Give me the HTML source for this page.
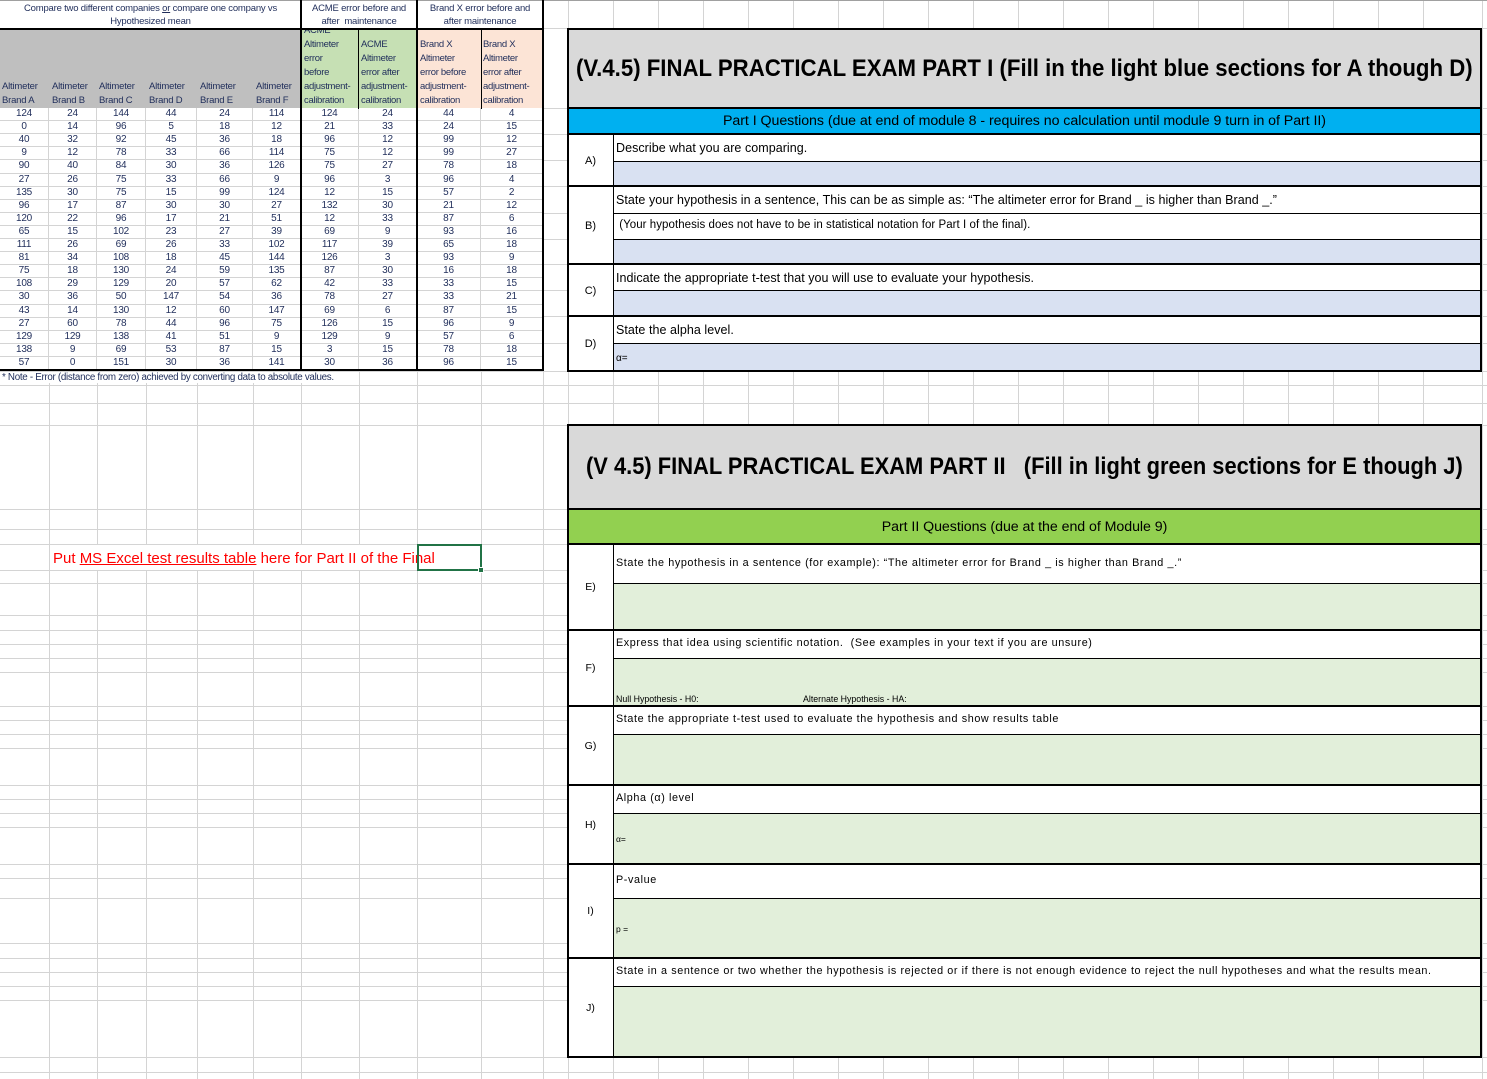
<!DOCTYPE html>
<html><head><meta charset="utf-8"><style>
*{margin:0;padding:0;box-sizing:border-box}
body{width:1487px;height:1079px;position:relative;overflow:hidden;background:#fff;font-family:"Liberation Sans",Arial,sans-serif;color:#000}
.a{position:absolute}
.nv{color:#1f2d5a}
.hl{position:absolute;white-space:nowrap}
.data{position:absolute;left:0;top:108px;width:543px;height:262px;display:grid;grid-template-columns:49px 48px 49px 51px 56px 48px 58px 58px 64px 62px;grid-template-rows:repeat(20,1fr);font-size:10px;color:#1f2d5a;letter-spacing:-0.2px}
.data div{text-align:center;line-height:12px;border-right:1px solid #d4d4d4;border-bottom:1px solid #d4d4d4;background:#fff}
.blk{position:absolute;background:#000}
.q1{position:absolute;font-size:12.5px;letter-spacing:0.05px;white-space:nowrap}
.q2{position:absolute;font-size:10.8px;letter-spacing:0.6px;white-space:nowrap}
.lab{position:absolute;font-size:11px;text-align:center;width:45px;left:568px}
</style></head><body>
<svg class="a" style="left:0;top:0" width="1487" height="1079">
<g stroke="#d4d4d4" stroke-width="1">
<line x1="49.5" y1="0" x2="49.5" y2="1079"/><line x1="97.5" y1="0" x2="97.5" y2="1079"/><line x1="146.5" y1="0" x2="146.5" y2="1079"/><line x1="197.5" y1="0" x2="197.5" y2="1079"/><line x1="253.5" y1="0" x2="253.5" y2="1079"/><line x1="301.5" y1="0" x2="301.5" y2="1079"/><line x1="359.5" y1="0" x2="359.5" y2="1079"/><line x1="417.5" y1="0" x2="417.5" y2="1079"/><line x1="481.5" y1="0" x2="481.5" y2="1079"/><line x1="543.5" y1="0" x2="543.5" y2="1079"/><line x1="568.5" y1="0" x2="568.5" y2="1079"/><line x1="613.5" y1="0" x2="613.5" y2="1079"/>
<line x1="658.5" y1="0" x2="658.5" y2="1079"/><line x1="703.5" y1="0" x2="703.5" y2="1079"/><line x1="748.5" y1="0" x2="748.5" y2="1079"/><line x1="793.5" y1="0" x2="793.5" y2="1079"/><line x1="838.5" y1="0" x2="838.5" y2="1079"/><line x1="883.5" y1="0" x2="883.5" y2="1079"/><line x1="928.5" y1="0" x2="928.5" y2="1079"/><line x1="973.5" y1="0" x2="973.5" y2="1079"/><line x1="1018.5" y1="0" x2="1018.5" y2="1079"/><line x1="1063.5" y1="0" x2="1063.5" y2="1079"/><line x1="1108.5" y1="0" x2="1108.5" y2="1079"/><line x1="1153.5" y1="0" x2="1153.5" y2="1079"/><line x1="1198.5" y1="0" x2="1198.5" y2="1079"/><line x1="1243.5" y1="0" x2="1243.5" y2="1079"/><line x1="1288.5" y1="0" x2="1288.5" y2="1079"/><line x1="1333.5" y1="0" x2="1333.5" y2="1079"/><line x1="1378.5" y1="0" x2="1378.5" y2="1079"/><line x1="1423.5" y1="0" x2="1423.5" y2="1079"/><line x1="1482.5" y1="0" x2="1482.5" y2="1079"/>
<line x1="0" y1="28.5" x2="1487" y2="28.5"/><line x1="0" y1="108.5" x2="1487" y2="108.5"/><line x1="0" y1="134.5" x2="1487" y2="134.5"/><line x1="0" y1="160.5" x2="1487" y2="160.5"/><line x1="0" y1="186.5" x2="1487" y2="186.5"/><line x1="0" y1="213.5" x2="1487" y2="213.5"/><line x1="0" y1="239.5" x2="1487" y2="239.5"/><line x1="0" y1="264.5" x2="1487" y2="264.5"/><line x1="0" y1="290.5" x2="1487" y2="290.5"/><line x1="0" y1="316.5" x2="1487" y2="316.5"/><line x1="0" y1="343.5" x2="1487" y2="343.5"/><line x1="0" y1="371.5" x2="1487" y2="371.5"/>
<line x1="0" y1="385.5" x2="1487" y2="385.5"/><line x1="0" y1="403.5" x2="1487" y2="403.5"/><line x1="0" y1="425.5" x2="1487" y2="425.5"/><line x1="0" y1="509.5" x2="1487" y2="509.5"/><line x1="0" y1="529.5" x2="1487" y2="529.5"/><line x1="0" y1="544.5" x2="1487" y2="544.5"/><line x1="0" y1="570.5" x2="1487" y2="570.5"/><line x1="0" y1="583.5" x2="1487" y2="583.5"/><line x1="0" y1="615.5" x2="1487" y2="615.5"/><line x1="0" y1="630.5" x2="1487" y2="630.5"/><line x1="0" y1="644.5" x2="1487" y2="644.5"/><line x1="0" y1="658.5" x2="1487" y2="658.5"/><line x1="0" y1="672.5" x2="1487" y2="672.5"/><line x1="0" y1="706.5" x2="1487" y2="706.5"/><line x1="0" y1="720.5" x2="1487" y2="720.5"/><line x1="0" y1="734.5" x2="1487" y2="734.5"/><line x1="0" y1="748.5" x2="1487" y2="748.5"/><line x1="0" y1="785.5" x2="1487" y2="785.5"/><line x1="0" y1="799.5" x2="1487" y2="799.5"/><line x1="0" y1="813.5" x2="1487" y2="813.5"/><line x1="0" y1="827.5" x2="1487" y2="827.5"/><line x1="0" y1="864.5" x2="1487" y2="864.5"/><line x1="0" y1="878.5" x2="1487" y2="878.5"/><line x1="0" y1="898.5" x2="1487" y2="898.5"/><line x1="0" y1="943.5" x2="1487" y2="943.5"/><line x1="0" y1="958.5" x2="1487" y2="958.5"/><line x1="0" y1="972.5" x2="1487" y2="972.5"/><line x1="0" y1="986.5" x2="1487" y2="986.5"/><line x1="0" y1="1000.5" x2="1487" y2="1000.5"/><line x1="0" y1="1057.5" x2="1487" y2="1057.5"/><line x1="0" y1="1072.5" x2="1487" y2="1072.5"/>
</g>
<line x1="0" y1="0.5" x2="1487" y2="0.5" stroke="#a0a0a0"/>
</svg>

<div class="a" style="left:0;top:1px;width:301px;height:27px;background:#fff"></div>
<div class="a nv" style="left:0;top:2px;width:301px;text-align:center;font-size:9.5px;line-height:13px;letter-spacing:-0.2px">Compare two different companies <u>or</u> compare one company vs<br>Hypothesized mean</div>
<div class="a" style="left:302px;top:1px;width:115px;height:27px;background:#fff"></div>
<div class="a nv" style="left:301px;top:2px;width:116px;text-align:center;font-size:9.5px;line-height:13px;letter-spacing:-0.2px">ACME error before and<br>after&nbsp; maintenance</div>
<div class="a" style="left:418px;top:1px;width:125px;height:27px;background:#fff"></div>
<div class="a nv" style="left:417px;top:2px;width:126px;text-align:center;font-size:9.5px;line-height:13px;letter-spacing:-0.2px">Brand X error before and<br>after maintenance</div>

<div class="a" style="left:0;top:29px;width:301px;height:79px;background:#bfbfbf"></div>
<div class="a" style="left:301px;top:29px;width:116px;height:79px;background:#c6e0b4;overflow:hidden"></div>
<div class="a" style="left:417px;top:29px;width:126px;height:79px;background:#fce4d6"></div>
<div class="a nv" style="font-size:9.5px;line-height:14px;left:2px;top:80px;letter-spacing:-0.2px">Altimeter<br>Brand A</div>
<div class="a nv" style="font-size:9.5px;line-height:14px;left:52px;top:80px;letter-spacing:-0.2px">Altimeter<br>Brand B</div>
<div class="a nv" style="font-size:9.5px;line-height:14px;left:99px;top:80px;letter-spacing:-0.2px">Altimeter<br>Brand C</div>
<div class="a nv" style="font-size:9.5px;line-height:14px;left:149px;top:80px;letter-spacing:-0.2px">Altimeter<br>Brand D</div>
<div class="a nv" style="font-size:9.5px;line-height:14px;left:200px;top:80px;letter-spacing:-0.2px">Altimeter<br>Brand E</div>
<div class="a nv" style="font-size:9.5px;line-height:14px;left:256px;top:80px;letter-spacing:-0.2px">Altimeter<br>Brand F</div>
<div class="a" style="left:303px;top:29px;width:56px;height:79px;overflow:hidden"><div class="a nv" style="font-size:9.5px;line-height:14px;left:1px;top:-5px;letter-spacing:-0.3px;white-space:nowrap">ACME<br>Altimeter<br>error<br>before<br>adjustment-<br>calibration</div></div>
<div class="a nv" style="font-size:9.5px;line-height:14px;left:361px;top:38px;letter-spacing:-0.3px;white-space:nowrap">ACME<br>Altimeter<br>error after<br>adjustment-<br>calibration</div>
<div class="a nv" style="font-size:9.5px;line-height:14px;left:420px;top:38px;letter-spacing:-0.3px;white-space:nowrap">Brand X<br>Altimeter<br>error before<br>adjustment-<br>calibration</div>
<div class="a nv" style="font-size:9.5px;line-height:14px;left:483px;top:38px;letter-spacing:-0.3px;white-space:nowrap">Brand X<br>Altimeter<br>error after<br>adjustment-<br>calibration</div>

<div class="data">
<div>124</div><div>24</div><div>144</div><div>44</div><div>24</div><div>114</div><div>124</div><div>24</div><div>44</div><div>4</div>
<div>0</div><div>14</div><div>96</div><div>5</div><div>18</div><div>12</div><div>21</div><div>33</div><div>24</div><div>15</div>
<div>40</div><div>32</div><div>92</div><div>45</div><div>36</div><div>18</div><div>96</div><div>12</div><div>99</div><div>12</div>
<div>9</div><div>12</div><div>78</div><div>33</div><div>66</div><div>114</div><div>75</div><div>12</div><div>99</div><div>27</div>
<div>90</div><div>40</div><div>84</div><div>30</div><div>36</div><div>126</div><div>75</div><div>27</div><div>78</div><div>18</div>
<div>27</div><div>26</div><div>75</div><div>33</div><div>66</div><div>9</div><div>96</div><div>3</div><div>96</div><div>4</div>
<div>135</div><div>30</div><div>75</div><div>15</div><div>99</div><div>124</div><div>12</div><div>15</div><div>57</div><div>2</div>
<div>96</div><div>17</div><div>87</div><div>30</div><div>30</div><div>27</div><div>132</div><div>30</div><div>21</div><div>12</div>
<div>120</div><div>22</div><div>96</div><div>17</div><div>21</div><div>51</div><div>12</div><div>33</div><div>87</div><div>6</div>
<div>65</div><div>15</div><div>102</div><div>23</div><div>27</div><div>39</div><div>69</div><div>9</div><div>93</div><div>16</div>
<div>111</div><div>26</div><div>69</div><div>26</div><div>33</div><div>102</div><div>117</div><div>39</div><div>65</div><div>18</div>
<div>81</div><div>34</div><div>108</div><div>18</div><div>45</div><div>144</div><div>126</div><div>3</div><div>93</div><div>9</div>
<div>75</div><div>18</div><div>130</div><div>24</div><div>59</div><div>135</div><div>87</div><div>30</div><div>16</div><div>18</div>
<div>108</div><div>29</div><div>129</div><div>20</div><div>57</div><div>62</div><div>42</div><div>33</div><div>33</div><div>15</div>
<div>30</div><div>36</div><div>50</div><div>147</div><div>54</div><div>36</div><div>78</div><div>27</div><div>33</div><div>21</div>
<div>43</div><div>14</div><div>130</div><div>12</div><div>60</div><div>147</div><div>69</div><div>6</div><div>87</div><div>15</div>
<div>27</div><div>60</div><div>78</div><div>44</div><div>96</div><div>75</div><div>126</div><div>15</div><div>96</div><div>9</div>
<div>129</div><div>129</div><div>138</div><div>41</div><div>51</div><div>9</div><div>129</div><div>9</div><div>57</div><div>6</div>
<div>138</div><div>9</div><div>69</div><div>53</div><div>87</div><div>15</div><div>3</div><div>15</div><div>78</div><div>18</div>
<div>57</div><div>0</div><div>151</div><div>30</div><div>36</div><div>141</div><div>30</div><div>36</div><div>96</div><div>15</div>
</div>
<div class="blk" style="left:0;top:28px;width:544px;height:2px"></div>
<div class="blk" style="left:0;top:369px;width:544px;height:2px"></div>
<div class="blk" style="left:300px;top:0;width:2px;height:371px"></div>
<div class="blk" style="left:416px;top:0;width:2px;height:371px"></div>
<div class="blk" style="left:542px;top:0;width:2px;height:371px"></div>
<div class="blk" style="left:358px;top:29px;width:1px;height:80px"></div>
<div class="blk" style="left:481px;top:29px;width:1px;height:80px"></div>
<div class="a nv" style="left:2px;top:372px;font-size:9.8px;letter-spacing:-0.3px;white-space:nowrap;background:#fff;padding-right:3px">* Note - Error (distance from zero) achieved by converting data to absolute values.</div>

<div class="a" style="left:50px;top:545px;width:366px;height:25px;background:#fff"></div>
<div class="a" style="left:53px;top:550px;font-size:15px;color:#ff0000;white-space:nowrap;letter-spacing:0px">Put <u>MS Excel test results table</u> here for Part II of the Final</div>
<div class="a" style="left:417px;top:544px;width:65px;height:27px;border:2px solid #217346"></div>
<div class="a" style="left:478px;top:567px;width:6px;height:6px;background:#217346;border:1px solid #fff"></div>

<!-- PART I -->
<div class="a" style="left:567px;top:28px;width:915px;height:344px;background:#fff;border:2px solid #000"></div>
<div class="a" style="left:569px;top:30px;width:911px;height:77px;background:#d9d9d9"></div>
<div class="hl" style="left:576px;top:55px;font-size:24px;font-weight:bold;transform:scaleX(0.925);transform-origin:left top">(V.4.5) FINAL PRACTICAL EXAM PART I (Fill in the light blue sections for A though D)</div>
<div class="blk" style="left:567px;top:107px;width:915px;height:2px"></div>
<div class="a" style="left:569px;top:109px;width:911px;height:24px;background:#00b0f0"></div>
<div class="hl" style="left:569px;width:911px;text-align:center;top:113px;font-size:14.2px;letter-spacing:-0.05px">Part I Questions (due at end of module 8 - requires no calculation until module 9 turn in of Part II)</div>
<div class="blk" style="left:567px;top:133px;width:915px;height:2px"></div>
<div class="blk" style="left:613px;top:134px;width:1px;height:237px"></div>
<div class="a" style="left:614px;top:161px;width:866px;height:25px;background:#d9e1f2;border-top:1px solid #000"></div>
<div class="blk" style="left:567px;top:185px;width:915px;height:2px"></div>
<div class="lab" style="top:155px">A)</div>
<div class="q1" style="left:616px;top:141px">Describe what you are comparing.</div>
<div class="a" style="left:614px;top:213px;width:866px;height:1px;background:#000"></div>
<div class="a" style="left:614px;top:239px;width:866px;height:25px;background:#d9e1f2;border-top:1px solid #000"></div>
<div class="blk" style="left:567px;top:263px;width:915px;height:2px"></div>
<div class="lab" style="top:220px">B)</div>
<div class="q1" style="left:616px;top:193px">State your hypothesis in a sentence, This can be as simple as: “The altimeter error for Brand _ is higher than Brand _.”</div>
<div class="q1" style="left:616px;top:219px;font-size:11.5px">&nbsp;(Your hypothesis does not have to be in statistical notation for Part I of the final).</div>
<div class="a" style="left:614px;top:290px;width:866px;height:26px;background:#d9e1f2;border-top:1px solid #000"></div>
<div class="blk" style="left:567px;top:315px;width:915px;height:2px"></div>
<div class="lab" style="top:285px">C)</div>
<div class="q1" style="left:616px;top:271px">Indicate the appropriate t-test that you will use to evaluate your hypothesis.</div>
<div class="a" style="left:614px;top:343px;width:866px;height:27px;background:#d9e1f2;border-top:1px solid #000"></div>
<div class="lab" style="top:338px">D)</div>
<div class="q1" style="left:616px;top:323px">State the alpha level.</div>
<div class="a" style="left:616px;top:353px;font-size:10px">α=</div>

<!-- PART II -->
<div class="a" style="left:567px;top:424px;width:915px;height:634px;background:#fff;border:2px solid #000"></div>
<div class="a" style="left:569px;top:426px;width:911px;height:83px;background:#d9d9d9"></div>
<div class="hl" style="left:586px;top:453px;font-size:24px;font-weight:bold;transform:scaleX(0.912);transform-origin:left top">(V 4.5) FINAL PRACTICAL EXAM PART II&nbsp;&nbsp; (Fill in light green sections for E though J)</div>
<div class="blk" style="left:567px;top:508px;width:915px;height:2px"></div>
<div class="a" style="left:569px;top:510px;width:911px;height:33px;background:#92d050"></div>
<div class="hl" style="left:569px;width:911px;text-align:center;top:519px;font-size:14.2px;letter-spacing:-0.05px">Part II Questions (due at the end of Module 9)</div>
<div class="blk" style="left:567px;top:543px;width:915px;height:2px"></div>
<div class="blk" style="left:613px;top:544px;width:1px;height:512px"></div>
<div class="a" style="left:614px;top:583px;width:866px;height:46px;background:#e2efda;border-top:1px solid #000"></div>
<div class="blk" style="left:567px;top:629px;width:915px;height:2px"></div>
<div class="lab" style="top:581px;font-size:10.5px">E)</div>
<div class="q2" style="left:616px;top:557px">State the hypothesis in a sentence (for example): “The altimeter error for Brand _ is higher than Brand _.”</div>
<div class="a" style="left:614px;top:658px;width:866px;height:47px;background:#e2efda;border-top:1px solid #000"></div>
<div class="blk" style="left:567px;top:705px;width:915px;height:2px"></div>
<div class="lab" style="top:662px;font-size:10.5px">F)</div>
<div class="q2" style="left:616px;top:637px">Express that idea using scientific notation.&nbsp; (See examples in your text if you are unsure)</div>
<div class="a" style="left:616px;top:694px;font-size:8.8px;white-space:nowrap">Null Hypothesis - H0:</div>
<div class="a" style="left:803px;top:694px;font-size:8.8px;white-space:nowrap">Alternate Hypothesis - HA:</div>
<div class="a" style="left:614px;top:734px;width:866px;height:50px;background:#e2efda;border-top:1px solid #000"></div>
<div class="blk" style="left:567px;top:784px;width:915px;height:2px"></div>
<div class="lab" style="top:740px;font-size:10.5px">G)</div>
<div class="q2" style="left:616px;top:713px">State the appropriate t-test used to evaluate the hypothesis and show results table</div>
<div class="a" style="left:614px;top:813px;width:866px;height:50px;background:#e2efda;border-top:1px solid #000"></div>
<div class="blk" style="left:567px;top:863px;width:915px;height:2px"></div>
<div class="lab" style="top:819px;font-size:10.5px">H)</div>
<div class="q2" style="left:616px;top:792px">Alpha (α) level</div>
<div class="a" style="left:616px;top:834px;font-size:8.5px">α=</div>
<div class="a" style="left:614px;top:898px;width:866px;height:59px;background:#e2efda;border-top:1px solid #000"></div>
<div class="blk" style="left:567px;top:957px;width:915px;height:2px"></div>
<div class="lab" style="top:905px;font-size:10.5px">I)</div>
<div class="q2" style="left:616px;top:874px">P-value</div>
<div class="a" style="left:616px;top:924px;font-size:8.5px">p =</div>
<div class="a" style="left:614px;top:986px;width:866px;height:70px;background:#e2efda;border-top:1px solid #000"></div>
<div class="lab" style="top:1002px;font-size:10.5px">J)</div>
<div class="q2" style="left:616px;top:965px">State in a sentence or two whether the hypothesis is rejected or if there is not enough evidence to reject the null hypotheses and what the results mean.</div>
</body></html>
